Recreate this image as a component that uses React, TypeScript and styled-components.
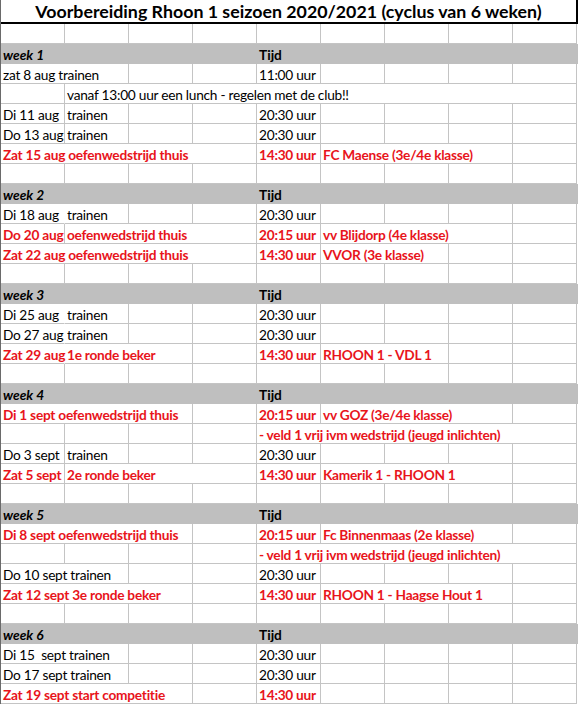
import styled, { createGlobalStyle, css } from "styled-components";

const GlobalStyle = createGlobalStyle`
  html, body {
    margin: 0;
    padding: 0;
    background: #ffffff;
  }
  body {
    font-family: "Lato", "Liberation Sans", sans-serif;
    color: #000000;
  }
`;

const GRID = "#c4c4c4";
const RED = "#e8141b";

type Cell = {
  t?: string;
  span?: number;
  join?: boolean;
};

type Row =
  | { kind: "blank" }
  | { kind: "head"; week: number }
  | { kind: "data"; red?: boolean; cells: Cell[] };

const empty = (n: number): Cell[] => Array.from({ length: n }, () => ({}));

const training = (day: string, time = "20:30 uur", joined = false): Cell[] => [
  { t: day, join: joined },
  { t: "trainen" },
  ...empty(2),
  { t: time },
  ...empty(4),
];

const longTraining = (text: string): Cell[] => [
  { t: text, span: 2 },
  ...empty(2),
  { t: "20:30 uur" },
  ...empty(4),
];

const veld: Row = {
  kind: "data",
  red: true,
  cells: [...empty(4), { t: "- veld 1 vrij ivm wedstrijd (jeugd inlichten)", span: 5 }],
};

const rows: Row[] = [
  { kind: "blank" },
  { kind: "head", week: 1 },
  {
    kind: "data",
    cells: [{ t: "zat 8 aug trainen", span: 2 }, ...empty(2), { t: "11:00 uur" }, ...empty(4)],
  },
  {
    kind: "data",
    cells: [{}, { t: "vanaf 13:00 uur een lunch - regelen met de club!!", span: 8 }],
  },
  { kind: "data", cells: training("Di 11 aug") },
  { kind: "data", cells: training("Do 13 aug") },
  {
    kind: "data",
    red: true,
    cells: [
      { t: "Zat 15 aug oefenwedstrijd thuis", span: 4 },
      { t: "14:30 uur" },
      { t: "FC Maense (3e/4e klasse)", span: 3 },
      {},
    ],
  },
  { kind: "blank" },
  { kind: "head", week: 2 },
  { kind: "data", cells: training("Di 18 aug", "20:30 uur", true) },
  {
    kind: "data",
    red: true,
    cells: [
      { t: "Do 20 aug" },
      { t: "oefenwedstrijd thuis", span: 3 },
      { t: "20:15 uur" },
      { t: "vv Blijdorp (4e klasse)", span: 3 },
      {},
    ],
  },
  {
    kind: "data",
    red: true,
    cells: [
      { t: "Zat 22 aug oefenwedstrijd thuis", span: 4 },
      { t: "14:30 uur" },
      { t: "VVOR (3e klasse)", span: 2 },
      ...empty(2),
    ],
  },
  { kind: "blank" },
  { kind: "head", week: 3 },
  { kind: "data", cells: training("Di 25 aug", "20:30 uur", true) },
  { kind: "data", cells: training("Do 27 aug", "20:30 uur", true) },
  {
    kind: "data",
    red: true,
    cells: [
      { t: "Zat 29 aug", join: true },
      { t: "1e ronde beker", span: 2 },
      {},
      { t: "14:30 uur" },
      { t: "RHOON 1 - VDL 1", span: 2 },
      ...empty(2),
    ],
  },
  { kind: "blank" },
  { kind: "head", week: 4 },
  {
    kind: "data",
    red: true,
    cells: [
      { t: "Di 1 sept oefenwedstrijd thuis", span: 3 },
      {},
      { t: "20:15 uur" },
      { t: "vv GOZ (3e/4e klasse)", span: 3 },
      {},
    ],
  },
  veld,
  { kind: "data", cells: training("Do 3 sept") },
  {
    kind: "data",
    red: true,
    cells: [
      { t: "Zat 5 sept" },
      { t: "2e ronde beker", span: 3 },
      { t: "14:30 uur" },
      { t: "Kamerik 1 - RHOON 1", span: 3 },
      {},
    ],
  },
  { kind: "blank" },
  { kind: "head", week: 5 },
  {
    kind: "data",
    red: true,
    cells: [
      { t: "Di 8 sept oefenwedstrijd thuis", span: 3 },
      {},
      { t: "20:15 uur" },
      { t: "Fc Binnenmaas (2e klasse)", span: 3 },
      {},
    ],
  },
  veld,
  { kind: "data", cells: longTraining("Do 10 sept trainen") },
  {
    kind: "data",
    red: true,
    cells: [
      { t: "Zat 12 sept 3e ronde beker", span: 3 },
      {},
      { t: "14:30 uur" },
      { t: "RHOON 1 - Haagse Hout 1", span: 3 },
      {},
    ],
  },
  { kind: "blank" },
  { kind: "head", week: 6 },
  { kind: "data", cells: longTraining("Di 15  sept trainen") },
  { kind: "data", cells: longTraining("Do 17 sept trainen") },
  {
    kind: "data",
    red: true,
    cells: [{ t: "Zat 19 sept start competitie", span: 3 }, {}, { t: "14:30 uur" }, ...empty(4)],
  },
];

const Sheet = styled.div`
  width: 577px;
  border-left: 1px solid #6a6a6a;
  font-size: 13.7px;
  letter-spacing: -0.25px;
`;

const TitleBar = styled.div`
  height: 22px;
  border-bottom: 2px solid #000000;
  border-right: 2px solid #000000;
  display: flex;
  align-items: center;
  justify-content: center;
  font-size: 17.8px;
  font-weight: 700;
  letter-spacing: 0;
  line-height: 22px;
  box-sizing: content-box;
`;

const SheetRow = styled.div<{ $head?: boolean; $red?: boolean }>`
  display: grid;
  grid-template-columns: repeat(9, 64px);
  height: 20px;
  background: ${(p) => (p.$head ? "#bfbfbf" : "#ffffff")};
  ${(p) =>
    p.$red &&
    css`
      color: ${RED};
      font-weight: 700;
    `}
`;

const SheetCell = styled.div<{ $span: number; $open?: boolean }>`
  grid-column: span ${(p) => p.$span};
  box-sizing: border-box;
  height: 20px;
  padding: 0 3px 0 2px;
  border-right: 1px solid ${(p) => (p.$open ? "transparent" : GRID)};
  border-bottom: 1px solid ${GRID};
  line-height: 21px;
  white-space: pre;
  overflow: visible;
`;

const HeadCell = styled.div<{ $span: number; $italic?: boolean }>`
  grid-column: span ${(p) => p.$span};
  box-sizing: border-box;
  height: 20px;
  padding: 0 2px;
  border-bottom: 1px solid #bfbfbf;
  font-weight: 700;
  font-style: ${(p) => (p.$italic ? "italic" : "normal")};
  letter-spacing: 0;
  line-height: 21px;
  white-space: pre;
`;

function SheetLine({ row }: { row: Row }) {
  if (row.kind === "blank") {
    return (
      <SheetRow>
        {empty(9).map((_, i) => (
          <SheetCell key={i} $span={1} />
        ))}
      </SheetRow>
    );
  }
  if (row.kind === "head") {
    return (
      <SheetRow $head>
        <HeadCell $span={4} $italic>
          week {row.week}
        </HeadCell>
        <HeadCell $span={5}>Tijd</HeadCell>
      </SheetRow>
    );
  }
  return (
    <SheetRow $red={row.red}>
      {row.cells.map((c, i) => (
        <SheetCell key={i} $span={c.span ?? 1} $open={c.join}>
          {c.t}
        </SheetCell>
      ))}
    </SheetRow>
  );
}

export default function App() {
  return (
    <>
      <GlobalStyle />
      <Sheet>
        <TitleBar>Voorbereiding Rhoon 1 seizoen 2020/2021 (cyclus van 6 weken)</TitleBar>
        {rows.map((r, i) => (
          <SheetLine key={i} row={r} />
        ))}
      </Sheet>
    </>
  );
}
